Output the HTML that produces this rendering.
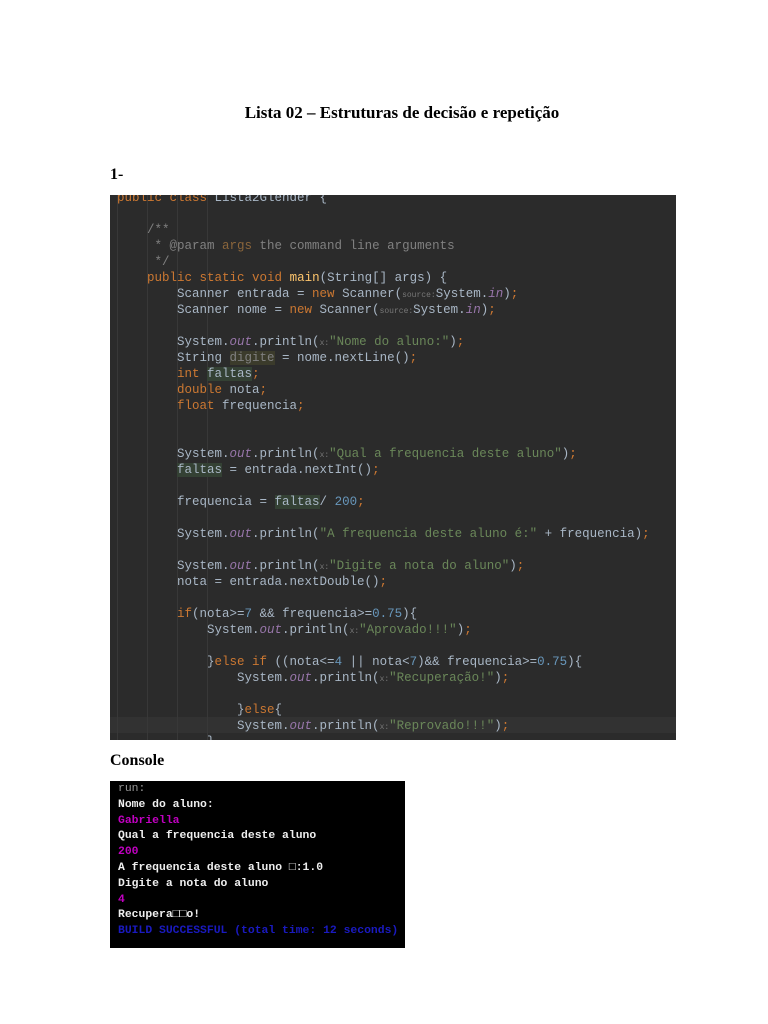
<!DOCTYPE html>
<html><head><meta charset="utf-8"><style>
body{margin:0;background:#fff;width:768px;height:1024px;position:relative;font-family:"Liberation Serif",serif;}
.t{position:absolute;font-weight:bold;color:#000;}
#code{position:absolute;left:110px;top:195px;width:566px;height:545px;background:#2b2b2b;overflow:hidden;}
#code pre{position:absolute;left:7px;top:-5px;margin:0;font:12.5px/16px "Liberation Mono",monospace;color:#a9b7c6;white-space:pre;}
.k{color:#cc7832}.s{color:#6a8759}.c{color:#808080}.o{color:#9876aa;font-style:italic}.n{color:#6897bb}.m{color:#ffc66d}
.h{color:#787878;font-size:8px;line-height:0}.hl{background:#344134}.hv{background:#3b3b2b;color:#808080}
.cur{position:absolute;left:0;top:522px;width:566px;height:16px;background:#323232}
.g{position:absolute;top:0;bottom:0;width:1px;background:#383838}
#con{position:absolute;left:110px;top:781px;width:295px;height:167px;background:#000;}
#con pre{margin:0;position:absolute;left:8px;top:1px;font:bold 11.4px/15.8px "Liberation Mono",monospace;color:#eee;}
.p{color:#c000c0}.b{color:#1a1ac0}.r{color:#999;font-weight:normal}
</style></head><body>
<div class="t" style="left:0;width:804px;text-align:center;top:103px;font-size:17px;">Lista 02 – Estruturas de decisão e repetição</div>
<div class="t" style="left:110px;top:166px;font-size:16px;">1-</div>
<div id="code"><div class="cur"></div><div class="g" style="left:7px"></div><div class="g" style="left:37px"></div><div class="g" style="left:67px"></div><div class="g" style="left:97px"></div>
<pre><span class="k">public class</span> Lista2Glender {

    <span class="c">/**</span>
<span class="c">     * @param </span><span class="c" style="color:#8a653b">args</span><span class="c"> the command line arguments</span>
<span class="c">     */</span>
    <span class="k">public static void</span> <span class="m">main</span>(String[] args) {
        Scanner entrada = <span class="k">new</span> Scanner(<span class="h">source:</span>System.<span class="o">in</span>)<span class="k">;</span>
        Scanner nome = <span class="k">new</span> Scanner(<span class="h">source:</span>System.<span class="o">in</span>)<span class="k">;</span>

        System.<span class="o">out</span>.println(<span class="h">x:</span><span class="s">"Nome do aluno:"</span>)<span class="k">;</span>
        String <span class="hv">digite</span> = nome.nextLine()<span class="k">;</span>
        <span class="k">int</span> <span class="hl">faltas</span><span class="k">;</span>
        <span class="k">double</span> nota<span class="k">;</span>
        <span class="k">float</span> frequencia<span class="k">;</span>


        System.<span class="o">out</span>.println(<span class="h">x:</span><span class="s">"Qual a frequencia deste aluno"</span>)<span class="k">;</span>
        <span class="hl">faltas</span> = entrada.nextInt()<span class="k">;</span>

        frequencia = <span class="hl">faltas</span>/ <span class="n">200</span><span class="k">;</span>

        System.<span class="o">out</span>.println(<span class="s">"A frequencia deste aluno é:"</span> + frequencia)<span class="k">;</span>

        System.<span class="o">out</span>.println(<span class="h">x:</span><span class="s">"Digite a nota do aluno"</span>)<span class="k">;</span>
        nota = entrada.nextDouble()<span class="k">;</span>

        <span class="k">if</span>(nota&gt;=<span class="n">7</span> &amp;&amp; frequencia&gt;=<span class="n">0.75</span>){
            System.<span class="o">out</span>.println(<span class="h">x:</span><span class="s">"Aprovado!!!"</span>)<span class="k">;</span>

            }<span class="k">else if</span> ((nota&lt;=<span class="n">4</span> || nota&lt;<span class="n">7</span>)&amp;&amp; frequencia&gt;=<span class="n">0.75</span>){
                System.<span class="o">out</span>.println(<span class="h">x:</span><span class="s">"Recuperação!"</span>)<span class="k">;</span>

                }<span class="k">else</span>{
                System.<span class="o">out</span>.println(<span class="h">x:</span><span class="s">"Reprovado!!!"</span>)<span class="k">;</span>
            }</pre></div>
<div class="t" style="left:110px;top:752px;font-size:16px;">Console</div>
<div id="con"><pre><span class="r">run:</span>
Nome do aluno:
<span class="p">Gabriella</span>
Qual a frequencia deste aluno
<span class="p">200</span>
A frequencia deste aluno □:1.0
Digite a nota do aluno
<span class="p">4</span>
Recupera□□o!
<span class="b">BUILD SUCCESSFUL (total time: 12 seconds)</span></pre></div>
</body></html>
